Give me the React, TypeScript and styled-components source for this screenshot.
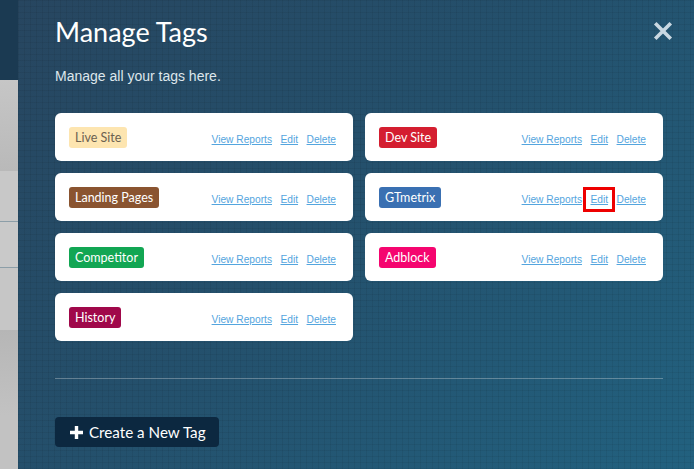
import React from 'react';
import styled, {createGlobalStyle} from 'styled-components';

const GlobalStyle = createGlobalStyle`
  html, body {
    margin: 0;
    padding: 0;
    width: 694px;
    height: 469px;
    overflow: hidden;
  }
  body {
    font-family: "Liberation Sans", Arial, sans-serif;
  }
`;

const Page = styled.div`
  display: flex;
  width: 694px;
  height: 469px;
`;

const Backdrop = styled.div`
  width: 18px;
  display: flex;
  flex-direction: column;
  flex-shrink: 0;
  box-shadow: inset -3px 0 4px rgba(0, 0, 0, 0.25);
`;

const BackdropBand = styled.div<{$h: number; $bg: string; $line?: boolean}>`
  height: ${p => p.$h}px;
  background: ${p => p.$bg};
  border-bottom: ${p => (p.$line ? '1px solid #8c9ea8' : 'none')};
  flex-shrink: 0;
`;

const Modal = styled.div`
  position: relative;
  flex: 1;
  padding: 16px 0 0 37px;
  background-color: #254a66;
  background-image:
    repeating-linear-gradient(0deg, rgba(0, 0, 0, 0.06) 0 1px, transparent 1px 6px),
    repeating-linear-gradient(90deg, rgba(0, 0, 0, 0.06) 0 1px, transparent 1px 6px),
    linear-gradient(135deg, #274660 0%, #24506c 45%, #22617f 100%);
  color: #fff;
`;

const Title = styled.h1`
  margin: 0;
  font-family: Lato, "Open Sans", sans-serif;
  font-weight: 400;
  font-size: 27px;
  line-height: 32px;
  color: #fff;
`;

const Close = styled.button`
  position: absolute;
  top: 20px;
  right: 20px;
  width: 22px;
  height: 22px;
  padding: 0;
  border: none;
  background: none;
  cursor: pointer;
`;

const Subtitle = styled.p`
  margin: 19px 0 0;
  font-size: 14px;
  line-height: 18px;
  color: #dde6ec;
`;

const Grid = styled.div`
  margin-top: 28px;
  width: 608px;
  display: grid;
  grid-template-columns: 298px 298px;
  grid-auto-rows: 48px;
  gap: 12px;
`;

const Card = styled.div`
  background: #fff;
  border-radius: 6px;
  display: flex;
  align-items: center;
  justify-content: space-between;
  padding: 0 17px 0 14px;
`;

const Badge = styled.span<{$bg: string; $fg: string}>`
  display: inline-flex;
  align-items: center;
  height: 21px;
  padding: 0 6px;
  border-radius: 3px;
  background: ${p => p.$bg};
  color: ${p => p.$fg};
  font-family: Lato, "Open Sans", sans-serif;
  font-size: 12.5px;
  margin-top: 1px;
`;

const Links = styled.div`
  display: flex;
  gap: 8.5px;
  font-size: 10.2px;
  margin-top: 4px;
`;

const Link = styled.a<{$highlight?: boolean}>`
  color: #54a5de;
  text-decoration: underline;
  cursor: pointer;
  outline: ${p => (p.$highlight ? '3px solid #ee0000' : 'none')};
  outline-offset: 4px;
`;

const Divider = styled.hr`
  margin: 37px 0 0;
  width: 608px;
  border: none;
  height: 1px;
  background: rgba(255, 255, 255, 0.3);
`;

const CreateButton = styled.button`
  margin-top: 38px;
  height: 30px;
  width: 164px;
  display: flex;
  align-items: center;
  gap: 5px;
  padding: 0 0 0 14px;
  border: none;
  border-radius: 4px;
  background: #0c2840;
  color: #fff;
  font-family: Lato, "Open Sans", sans-serif;
  font-size: 15.2px;
  cursor: pointer;
`;

const tags = [
  {name: 'Live Site', bg: '#fde5b0', fg: '#6b6150'},
  {name: 'Dev Site', bg: '#d41e30', fg: '#fff'},
  {name: 'Landing Pages', bg: '#8a5430', fg: '#fff'},
  {name: 'GTmetrix', bg: '#3a70b2', fg: '#fff', highlight: true},
  {name: 'Competitor', bg: '#12a653', fg: '#fff'},
  {name: 'Adblock', bg: '#f5056f', fg: '#fff'},
  {name: 'History', bg: '#a0084a', fg: '#fff'},
];

const bands = [
  {h: 80, bg: '#1b3a52'},
  {h: 91, bg: 'linear-gradient(#c6c6c6, #b9b9b9)'},
  {h: 50, bg: '#c8c8c8', line: true},
  {h: 45, bg: '#c9c9c9', line: true},
  {h: 62, bg: '#c6c6c6'},
  {h: 85, bg: 'linear-gradient(#b6b6b6, #c2c2c2)'},
  {h: 56, bg: '#c2c2c2'},
];

export default function App() {
  return (
    <Page>
      <GlobalStyle />
      <Backdrop>
        {bands.map((b, i) => (
          <BackdropBand key={i} $h={b.h} $bg={b.bg} $line={b.line} />
        ))}
      </Backdrop>
      <Modal>
        <Title>Manage Tags</Title>
        <Close aria-label="Close">
          <svg width="22" height="22" viewBox="0 0 22 22">
            <path d="M4.5 4.5 L17.5 17.5 M17.5 4.5 L4.5 17.5" stroke="#c9d8e2" strokeWidth="3.6" strokeLinecap="square" />
          </svg>
        </Close>
        <Subtitle>Manage all your tags here.</Subtitle>
        <Grid>
          {tags.map(t => (
            <Card key={t.name}>
              <Badge $bg={t.bg} $fg={t.fg}>{t.name}</Badge>
              <Links>
                <Link>View Reports</Link>
                <Link $highlight={t.highlight}>Edit</Link>
                <Link>Delete</Link>
              </Links>
            </Card>
          ))}
        </Grid>
        <Divider />
        <CreateButton>
          <svg width="15" height="15" viewBox="0 0 15 15">
            <path d="M7.5 1 V14 M1 7.5 H14" stroke="#fff" strokeWidth="3.4" />
          </svg>
          Create a New Tag
        </CreateButton>
      </Modal>
    </Page>
  );
}
